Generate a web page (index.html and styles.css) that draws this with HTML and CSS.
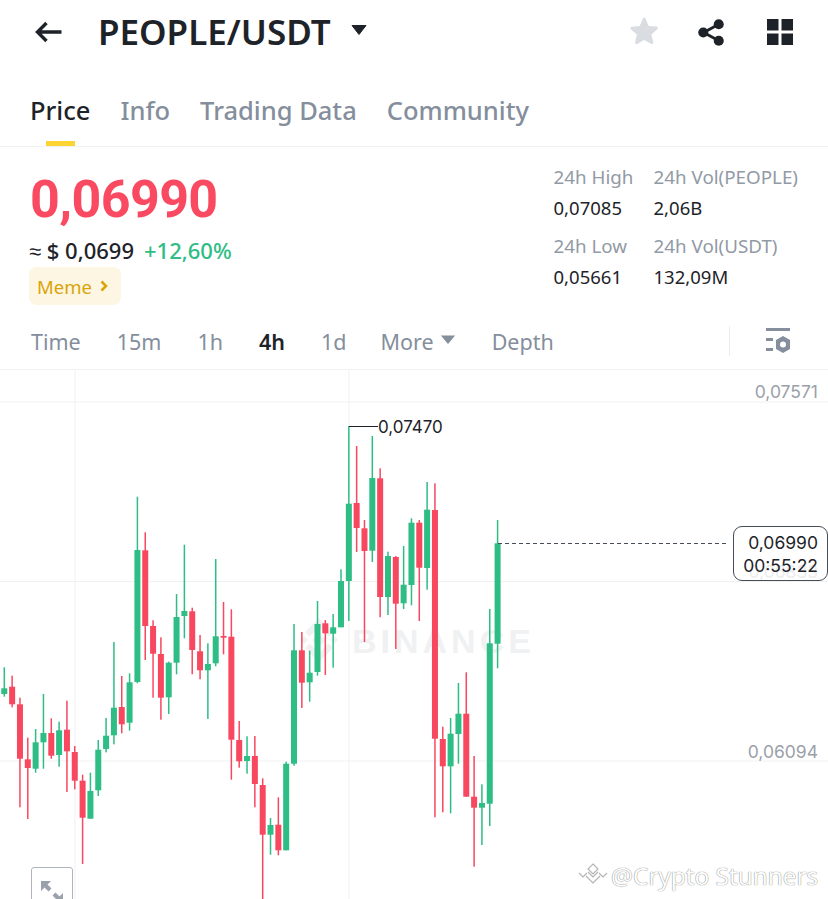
FILE: index.html
```html
<!DOCTYPE html>
<html lang="en">
<head>
    <meta charset="UTF-8">
    <meta name="viewport" content="width=device-width, initial-scale=1.0">
    <title>PEOPLE/USDT</title>
    <link rel="stylesheet" href="styles.css">
</head>
<body>
    <div class="page">
        <header class="topbar">
            <svg class="icon-back" viewBox="0 0 30 24"><path d="M28 12H4M13 3l-9 9 9 9"/></svg>
            <h1 class="pair">PEOPLE/USDT</h1>
            <svg class="icon-caret" viewBox="0 0 16 12"><path d="M1 1.5h14L8 10.5z"/></svg>
            <div class="topbar-actions">
                <svg class="icon-star" viewBox="0 0 30 30"><path d="M15 1.5c.8 0 1.3.5 1.6 1.2l3 7.2 7.8.7c1.5.1 2 1.6.9 2.6l-5.900 5.200 1.800 7.700c.3 1.400-1 2.300-2.200 1.600L15 24l-6.700 3.900c-1.200.7-2.500-.2-2.200-1.600l1.800-7.700-5.900-5.200c-1.100-1-.6-2.500.9-2.600l7.800-.7 3-7.200c.3-.7.800-1.200 1.300-1.200z"/></svg>
                <svg class="icon-share" viewBox="0 0 30 30"><path d="M22.500 6.500 7 15l15.500 8.500"/><circle cx="22.500" cy="6.500" r="5.200"/><circle cx="6.500" cy="15" r="5.200"/><circle cx="22.500" cy="23.500" r="5.200"/></svg>
                <svg class="icon-grid" viewBox="0 0 26 26"><rect width="11.500" height="11.500"/><rect x="14.500" width="11.500" height="11.500"/><rect y="14.500" width="11.500" height="11.500"/><rect x="14.500" y="14.500" width="11.500" height="11.500"/></svg>
            </div>
        </header>

        <nav class="tabs">
            <a class="tab active">Price</a>
            <a class="tab">Info</a>
            <a class="tab">Trading Data</a>
            <a class="tab">Community</a>
        </nav>

        <section class="summary">
            <div class="quote">
                <div class="last-price">0,06990</div>
                <div class="quote-line">
                    <span class="approx">≈ $ 0,0699</span>
                    <span class="change">+12,60%</span>
                </div>
                <a class="chip">Meme
                    <svg viewBox="0 0 10 12"><path d="M2.500 1.500 7 6l-4.500 4.500"/></svg>
                </a>
            </div>
            <div class="stats">
                <div class="stat-col first">
                    <span class="stat-label">24h High</span>
                    <span class="stat-value">0,07085</span>
                    <span class="stat-label">24h Low</span>
                    <span class="stat-value">0,05661</span>
                </div>
                <div class="stat-col">
                    <span class="stat-label">24h Vol(PEOPLE)</span>
                    <span class="stat-value">2,06B</span>
                    <span class="stat-label">24h Vol(USDT)</span>
                    <span class="stat-value">132,09M</span>
                </div>
            </div>
        </section>

        <div class="intervals">
            <a class="interval">Time</a>
            <a class="interval">15m</a>
            <a class="interval">1h</a>
            <a class="interval active">4h</a>
            <a class="interval">1d</a>
            <a class="interval more">More
                <svg viewBox="0 0 18 12"><path d="M1 1.500h16L9 11z"/></svg>
            </a>
            <a class="interval">Depth</a>
            <div class="interval-tools">
                <svg viewBox="0 0 24 26"><path d="M0 0h24v3H0zM0 10h7v3H0zM0 20h7v3H0z"/><path fill-rule="evenodd" d="M17 8l7 4v9l-7 4-7-4v-9zM17 13.500a3 3 0 1 0 0 6 3 3 0 0 0 0-6z"/></svg>
            </div>
        </div>

        <section class="chart">
            <svg id="chartSvg" class="chart-svg" viewBox="0 370 828 529">
                <path class="grid" d="M0 402H828M0 581.500H828M0 761H828M75 370V899M349 370V899"/>
                <path class="wm-logo" d="M319 633l7 7-7 7-7-7zM304 636l4 4-4 4-4-4zM334 636l4 4-4 4-4-4zM319 618l14 14-4.500 4.500-9.500-9.500-9.500 9.500-4.500-4.500zM319 662l14-14-4.500-4.500-9.500 9.500-9.500-9.500-4.500 4.500z"/>
                <text class="wm-text" x="352" y="653">BINANCE</text>
                <text class="axis" x="818" y="398">0,07571</text>
                <text class="axis" x="818" y="578">0,06833</text>
                <text class="axis" x="818" y="758">0,06094</text>
                <g id="candles"></g>
                <path class="peak-line" d="M349 426.500H378"/>
                <text class="peak" x="378" y="433">0,07470</text>
                <path class="last-line" d="M498 543.500H729"/>
            </svg>
            <div class="last-box">
                <span>0,06990</span>
                <span>00:55:22</span>
            </div>
            <button class="expand">
                <svg viewBox="0 0 26 26"><path d="M2 2h10l-3.500 3.500 4 4-3 3-4-4L2 12zM24 24H14l3.500-3.500-4-4 3-3 4 4L24 14z"/></svg>
            </button>
            <div class="credit">
                <svg viewBox="0 0 30 26"><path d="M15 1l5 5-5 5-5-5zM1 10l4 4 4-4M21 10l4 4 4-4M8 13l7 7 7-7M10 9l5 5 5-5"/></svg>
                <span>@Crypto Stunners</span>
            </div>
        </section>
    </div>
    <script src="chart.js"></script>
</body>
</html>
```

FILE: styles.css
```css
* {
    box-sizing: border-box;
}
body {
    margin: 0;
    background-color: #fff;
    font-family: "Noto Sans", Arial, sans-serif;
    color: #1e2329;
}
.page {
    height: 899px;
    overflow: hidden;
    display: flex;
    flex-direction: column;
}

/* Top bar */
.topbar {
    height: 64px;
    flex: none;
    display: flex;
    align-items: center;
    padding: 0 35px 0 33px;
}
.icon-back {
    width: 31px;
    height: 24px;
    fill: none;
    stroke: #1e2329;
    stroke-width: 3.4;
}
.pair {
    margin: -2px 0 0 34px;
    font-size: 35px;
    font-weight: 600;
    line-height: 1;
}
.icon-caret {
    width: 16px;
    height: 12px;
    margin: -5px 0 0 20px;
    fill: #1e2329;
    stroke: #1e2329;
    stroke-linejoin: round;
}
.topbar-actions {
    margin-left: auto;
    display: flex;
    align-items: center;
}
.icon-star {
    width: 30px;
    height: 30px;
    margin: -2px 38px 0 0;
    fill: #d9dce1;
}
.icon-share {
    width: 29px;
    height: 29px;
    margin-right: 41px;
    fill: #1e2329;
    stroke: none;
}
.icon-share path {
    fill: none;
    stroke: #1e2329;
    stroke-width: 3;
}
.icon-grid {
    width: 26px;
    height: 26px;
    fill: #1e2329;
}

/* Tabs */
.tabs {
    height: 83px;
    flex: none;
    display: flex;
    gap: 30px;
    padding: 24px 0 0 30px;
    border-bottom: 1px solid #f0f1f2;
}
.tab {
    position: relative;
    font-size: 25.5px;
    font-weight: 500;
    line-height: 44px;
    color: #848e9c;
}
.tab.active {
    color: #1e2329;
}
.tab.active::after {
    content: "";
    position: absolute;
    left: 16px;
    top: 53px;
    width: 29px;
    height: 5px;
    background-color: #fcd535;
}

/* Price summary */
.summary {
    height: 170px;
    flex: none;
    display: flex;
    justify-content: space-between;
    padding: 0 30px 0 29px;
}
.last-price {
    margin: 25px 0 0 1px;
    font-family: Roboto, Arial, sans-serif;
    font-size: 52px;
    font-weight: 700;
    line-height: 55px;
    letter-spacing: -0.6px;
    color: #fa4a62;
}
.quote-line {
    margin-top: 9px;
    display: flex;
    gap: 10px;
    font-size: 22px;
    font-weight: 500;
    line-height: 28px;
}
.change {
    color: #2ebd85;
}
.chip {
    width: 92px;
    height: 38px;
    margin-top: 3px;
    display: flex;
    align-items: center;
    gap: 7px;
    padding-left: 8px;
    border-radius: 8px;
    background-color: #fdf6e3;
    font-size: 18.5px;
    color: #d9a406;
}
.chip svg {
    width: 10px;
    height: 12px;
    fill: none;
    stroke: #d9a406;
    stroke-width: 2.500;
}
.stats {
    display: flex;
    padding-top: 15px;
}
.stat-col {
    display: flex;
    flex-direction: column;
}
.stat-col.first {
    width: 100px;
}
.stat-label {
    margin-bottom: -1px;
    font-size: 18.8px;
    line-height: 31px;
    color: #929aa5;
}
.stat-value {
    font-size: 18.5px;
    line-height: 31px;
    margin-bottom: 8px;
}

/* Interval row */
.intervals {
    height: 53px;
    flex: none;
    display: flex;
    align-items: center;
    gap: 36px;
    padding: 0 38px 4px 31px;
    border-bottom: 1px solid #f0f1f2;
}
.interval {
    font-size: 21.5px;
    color: #848e9c;
}
.interval.active {
    font-weight: 600;
    color: #1e2329;
}
.more {
    margin-left: -2px;
    display: flex;
    align-items: center;
    gap: 6px;
}
.more svg {
    width: 16px;
    height: 11px;
    margin-top: -3px;
    fill: #848e9c;
}
.interval-tools {
    width: 61px;
    height: 30px;
    margin-left: auto;
    display: flex;
    justify-content: flex-end;
    align-items: center;
    border-left: 1px solid #eaecef;
}
.interval-tools svg {
    width: 24px;
    height: 26px;
    fill: #848e9c;
}

/* Chart */
.chart {
    position: relative;
    flex: 1;
    overflow: hidden;
}
.chart-svg {
    display: block;
    width: 828px;
    height: 529px;
}
.grid {
    fill: none;
    stroke: #f0f1f3;
    stroke-width: 1;
}
.wm-logo {
    fill: #f0f1f2;
}
.wm-text {
    font-family: "Liberation Sans", Arial, sans-serif;
    font-size: 34px;
    font-weight: 700;
    letter-spacing: 4px;
    fill: #f0f1f2;
}
.axis {
    font-family: Inter, Arial, sans-serif;
    font-size: 17.5px;
    text-anchor: end;
    fill: #9aa0a9;
}
.peak {
    font-family: Inter, Arial, sans-serif;
    font-size: 17px;
    fill: #1e2329;
}
.peak-line {
    stroke: #1e2329;
    stroke-width: 1;
}
.last-line {
    stroke: #474d57;
    stroke-width: 1;
    stroke-dasharray: 4 3;
}
.candle-up {
    fill: #2ebd85;
}
.candle-down {
    fill: #f84860;
}
.last-box {
    position: absolute;
    left: 733px;
    top: 156px;
    width: 95px;
    height: 55px;
    display: flex;
    flex-direction: column;
    align-items: flex-end;
    justify-content: center;
    padding-right: 9px;
    border: 1px solid #474d57;
    border-radius: 9px;
    background-color: rgba(255, 255, 255, 0.8);
    font-family: Inter, Arial, sans-serif;
    font-size: 17.5px;
    line-height: 23px;
}
.expand {
    position: absolute;
    left: 31px;
    top: 497px;
    width: 42px;
    height: 42px;
    padding: 0;
    border: 1px solid #aeb4bc;
    border-radius: 3px;
    background-color: #fff;
}
.expand svg {
    display: block;
    width: 26px;
    height: 26px;
    margin: 8px 0 0 7px;
    fill: #9aa1ab;
}
.credit {
    position: absolute;
    left: 578px;
    top: 491px;
    display: flex;
    align-items: center;
    gap: 3px;
    font-family: "Open Sans", Arial, sans-serif;
    font-size: 24.5px;
    line-height: 30px;
    color: #fff;
    text-shadow: 0 0 1px #8c8c8c, 0 0 1px #8c8c8c;
}
.credit svg {
    width: 30px;
    height: 26px;
    fill: none;
    stroke: #b5b5b5;
    stroke-width: 1.200;
}
```

FILE: chart.js
```javascript
// candles as [up, wick top, body top, body bottom, wick bottom], y in page px
const candles = [
    [1, 667.3, 688.3, 694, 696.7], [0, 675.7, 686.7, 704.3, 707.3], [0, 697.7, 704.3, 758.7, 807.3],
    [0, 737.7, 759.3, 768, 819], [1, 729, 742.3, 768.7, 772.7], [1, 694, 733, 742.3, 768.7],
    [0, 718.3, 733, 755.7, 758.7], [1, 721.7, 730.3, 755, 766.7], [0, 700.7, 729.7, 751.3, 792],
    [0, 746, 752, 780.7, 789.3], [0, 774.7, 780.7, 817.7, 864], [1, 772.7, 791, 818.7, 818.7],
    [1, 740, 749.7, 790.3, 796], [1, 718, 735.7, 749, 752.3], [1, 642, 707.7, 735.3, 744.3],
    [0, 676, 707, 724.3, 733.3], [1, 673.3, 682.3, 722.7, 730.7], [1, 496.7, 550, 682, 683.3],
    [0, 532.3, 550.3, 626, 660], [0, 620.3, 626, 653.7, 697.7], [0, 637.3, 654, 697.7, 719.7],
    [1, 661.7, 662.7, 697.3, 714], [1, 594, 617, 662.7, 674.3], [1, 544.7, 611, 616, 638.3],
    [0, 607.7, 611.3, 650, 674.3], [0, 635, 651.3, 670.3, 679.3], [1, 643.3, 664, 670.3, 719],
    [1, 559, 636.3, 663.3, 666.3], [0, 602, 636, 637.7, 654.3], [0, 609.3, 636.7, 739.7, 779.7],
    [0, 721, 740, 761.3, 767.7], [1, 736.3, 756, 761, 773.7], [0, 736, 756, 784, 807.3],
    [0, 778.3, 785, 834.7, 899], [1, 818, 825, 834.7, 854.7], [0, 797.3, 824.7, 850.3, 855.3],
    [1, 761.7, 763.7, 850.3, 850.3], [1, 624, 650.3, 763.7, 765.7], [0, 632, 650.3, 682.7, 708],
    [1, 650.7, 672.7, 682.3, 701.7], [1, 601, 624, 672, 675.7], [0, 620, 623.3, 633.3, 675],
    [1, 614, 627.3, 633.7, 667.7], [1, 569.3, 581, 627.3, 627.3], [1, 426, 503.7, 581, 621],
    [0, 446, 503, 528, 552], [0, 520, 528.3, 551, 642], [1, 436, 478, 550.7, 562],
    [0, 468.3, 478.3, 597, 617.3], [1, 551.7, 556, 597, 615], [0, 556, 557, 603.7, 649],
    [1, 546, 584.7, 603.3, 609], [1, 518.3, 522.7, 585, 605.3], [0, 520, 522.7, 567.7, 621],
    [1, 482, 509.7, 568, 589.7], [0, 483.3, 510, 738.7, 817.3], [0, 726.7, 739, 766.3, 812.3],
    [1, 718, 733.7, 766.3, 813.3], [1, 683, 713.7, 734, 763.7], [0, 672.3, 713.7, 796.7, 796.7],
    [0, 756, 796.7, 807.7, 866.7], [1, 784.3, 803, 807.7, 845], [1, 609, 643.3, 803.7, 826],
    [1, 520, 543.3, 643.7, 668.3]
];

const firstX = 4.3;
const step = 7.83;
const bodyWidth = 6;
const wickWidth = 1.5;
const svgNs = 'http://www.w3.org/2000/svg';
const group = document.getElementById('candles');

function addRect(cls, x, y, w, h) {
    const rect = document.createElementNS(svgNs, 'rect');
    rect.setAttribute('class', cls);
    rect.setAttribute('x', x);
    rect.setAttribute('y', y);
    rect.setAttribute('width', w);
    rect.setAttribute('height', h);
    group.appendChild(rect);
}

candles.forEach((c, i) => {
    const cls = c[0] ? 'candle-up' : 'candle-down';
    const x = firstX + i * step;
    addRect(cls, x - wickWidth / 2, c[1], wickWidth, c[4] - c[1]);
    addRect(cls, x - bodyWidth / 2, c[2], bodyWidth, c[3] - c[2]);
});
```
